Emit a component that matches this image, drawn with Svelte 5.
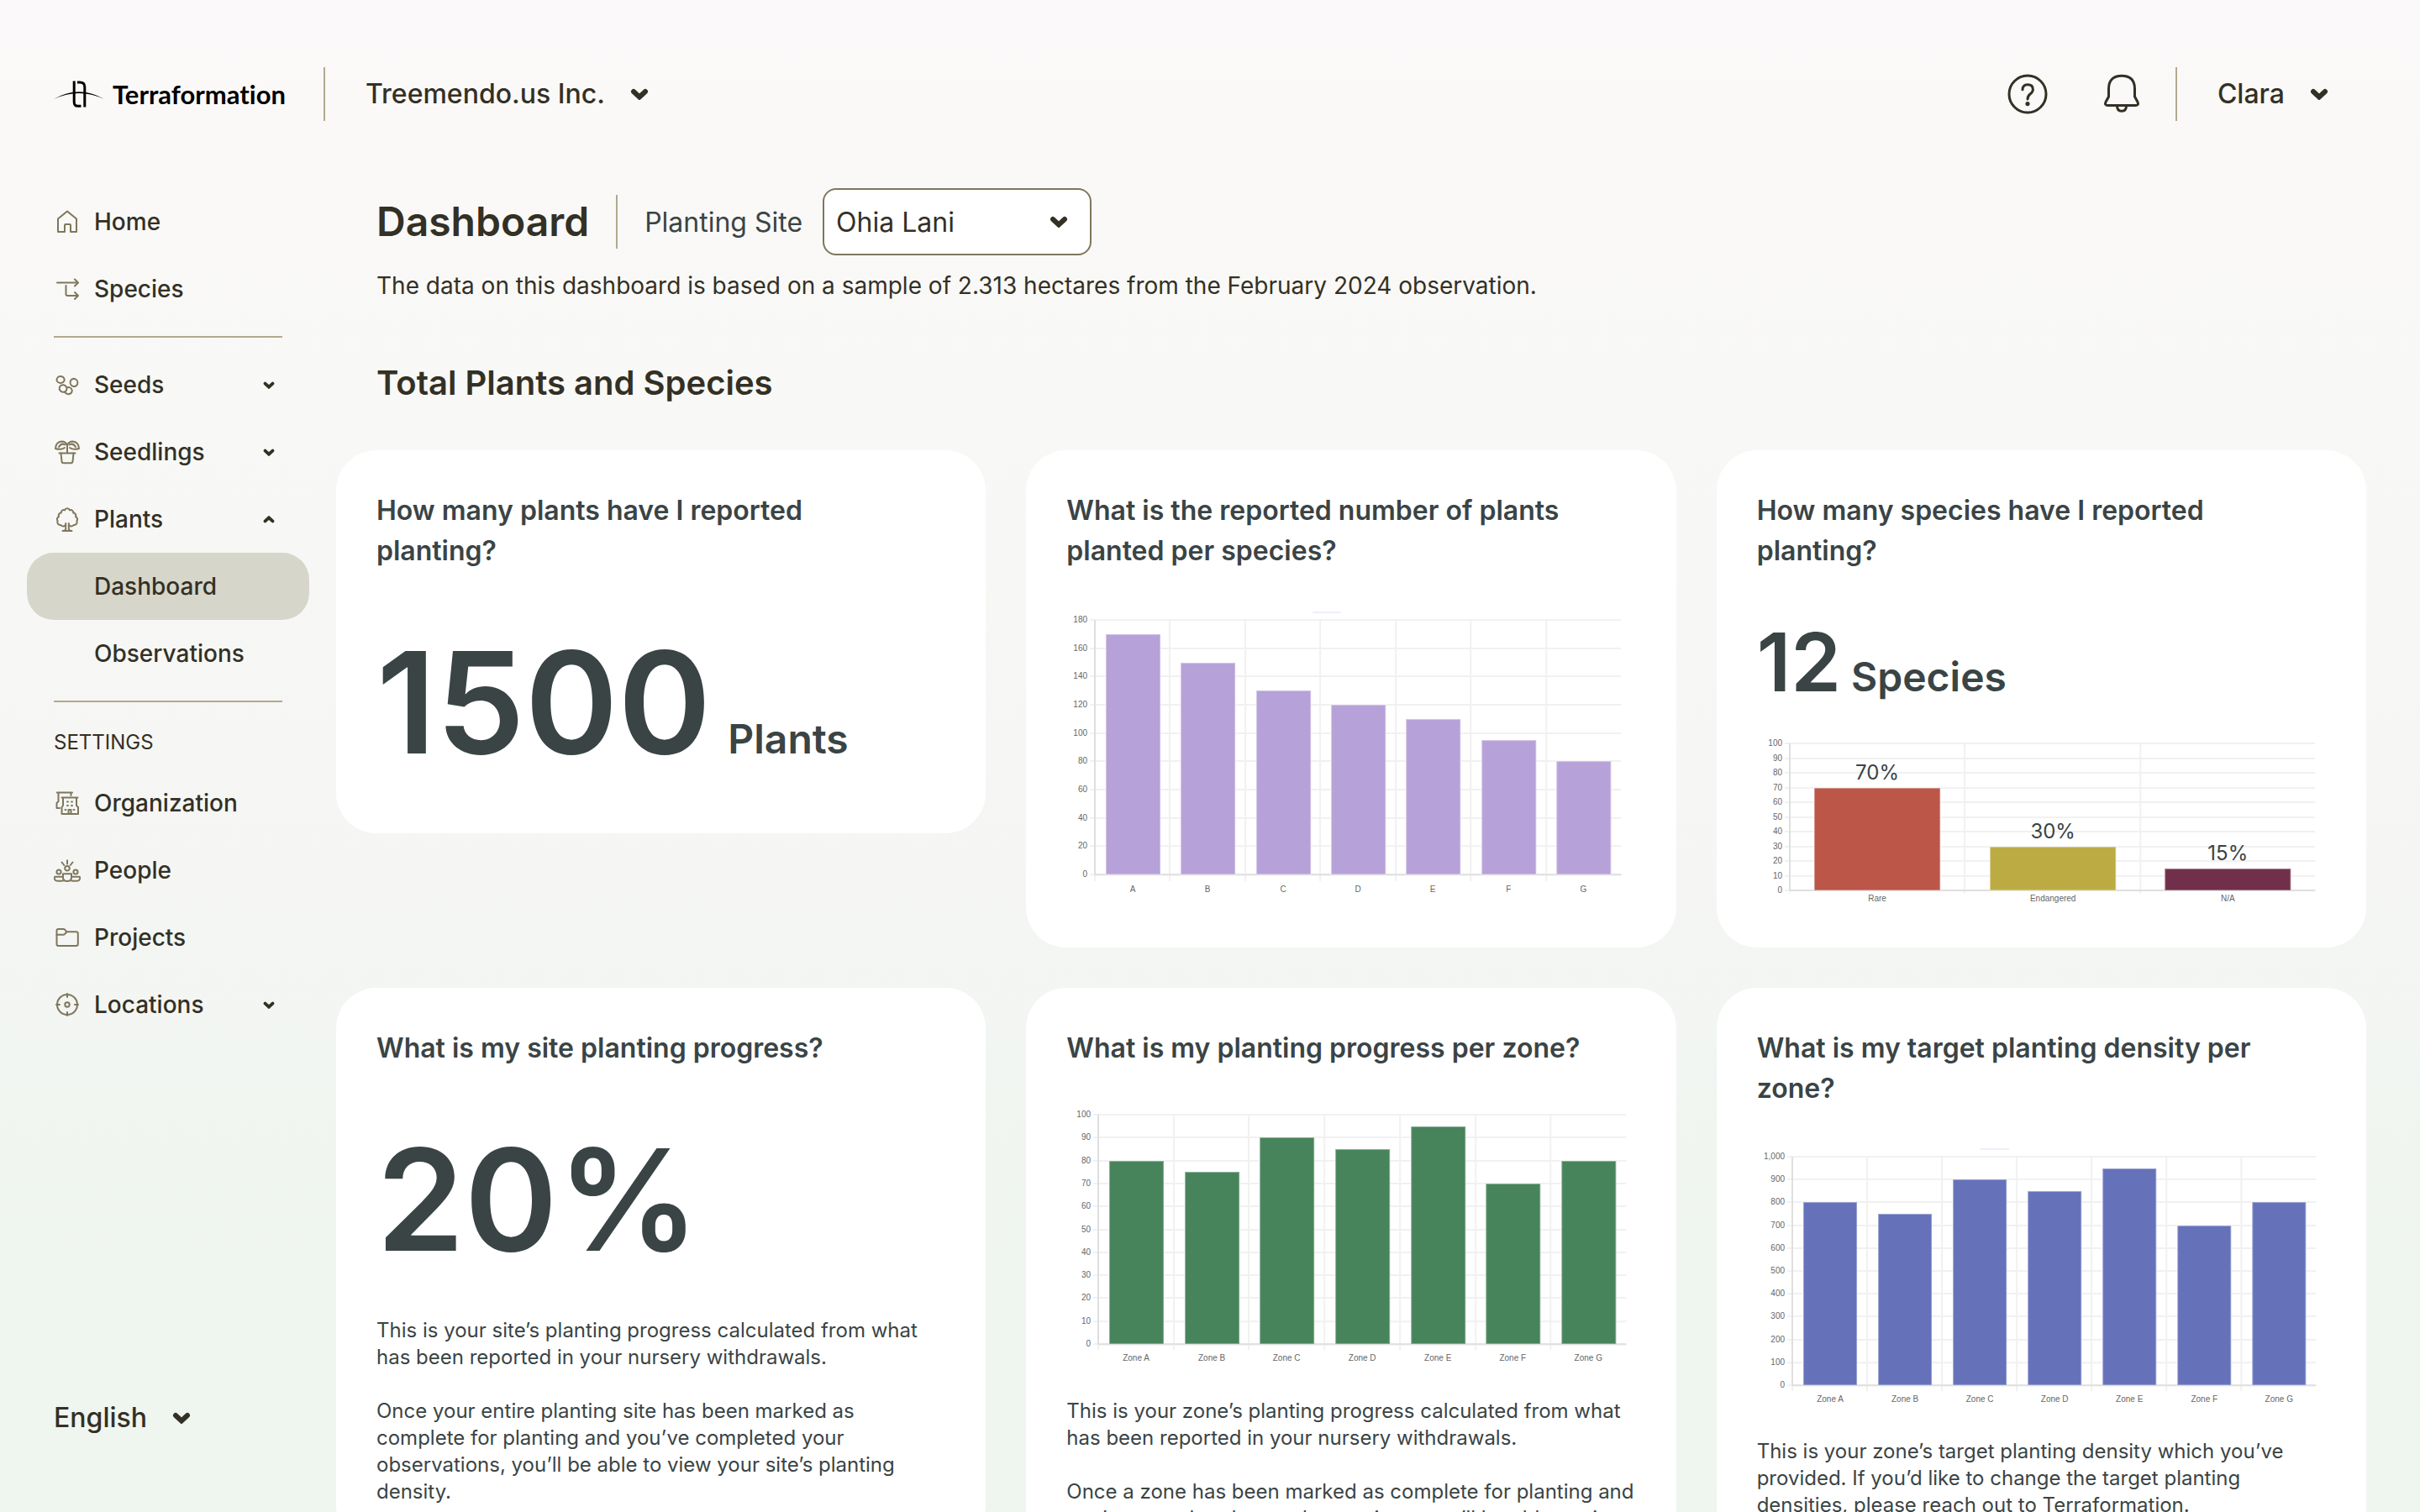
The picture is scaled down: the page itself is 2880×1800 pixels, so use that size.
<script>
  const caret = 'M4 4 L11 10.5 L18 4';

  const icons = {
    home: ['M5 12.5 L16 3.5 L27 12.5 V28 H20 V20 Q20 19 19 19 H14 Q13 19 13 20 V28 H5 Z'],
    species: ['M4 8.5 H28', 'M25 4.5 L29 8.5 L25 12.5', 'M14.5 12 V22 Q14.5 24 16.5 24 H28', 'M25 20 L29 24 L25 28'],
    seeds: [
      'M3.5 10 a4.6 4 0 1 0 9.2 0 a4.6 4 0 1 0 -9.2 0',
      'M19.8 12 a4.3 4.6 -20 1 0 8.4 3 a4.3 4.6 -20 1 0 -8.4 -3',
      'M6.8 19.8 a4.4 3.9 20 1 0 8.6 1.5 a4.4 3.9 20 1 0 -8.6 -1.5',
      'M16.5 19.2 A4.4 4 0 1 1 13.2 24.4'
    ],
    seedlings: [
      'M16 17 V8 Q14 3.5 9.5 3.5 Q2.5 4 2 12 Q9 14 13 11',
      'M16 8 Q18 3.5 22.5 3.5 Q29.5 4 30 12 Q23 14 19 11',
      'M13.5 7.5 Q9 5 6 10',
      'M18.5 7.5 Q23 5 26 10',
      'M6.5 17.5 H25.5',
      'M8.5 17.5 L9.5 27.5 Q9.8 29.3 11.5 29.3 H20.5 Q22.2 29.3 22.5 27.5 L23.5 17.5'
    ],
    plants: [
      'M13.5 23.5 A3.4 3.4 0 0 1 8.3 23 A3.4 3.4 0 0 1 4.6 18.2 A3.2 3.2 0 0 1 6 13.2 A3.2 3.2 0 0 1 8.8 8.6 A3 3 0 0 1 13 5.4 A3.2 3.2 0 0 1 19 5.4 A3 3 0 0 1 23.2 8.6 A3.2 3.2 0 0 1 26 13.2 A3.2 3.2 0 0 1 27.4 18.2 A3.4 3.4 0 0 1 23.7 23 A3.4 3.4 0 0 1 18.5 23.5',
      'M14.2 21 V28 Q14 30 10.5 30 H21.5 Q18 30 17.8 28 V21'
    ],
    organization: [
      'M3.8 3.5 H22 M5.5 3.5 V14 L3.5 16 V22 H7 M20.5 3.5 V7',
      'M9.5 9.5 H28.5 M11 9.5 V19 L9.5 21 V29 H29 V21 L27 19 V9.5',
      'M16 14.5 h1 M21 14.5 h1 M16 19 h1 M21 19 h1 M13.5 24 h1 M23.5 24 h1',
      'M17.5 29 V24 H20.5 V29'
    ],
    people: [
      'M13.2 13.7 a2.8 2.8 0 1 0 5.6 0 a2.8 2.8 0 1 0 -5.6 0',
      'M3.4 18 a2.6 2.6 0 1 0 5.2 0 a2.6 2.6 0 1 0 -5.2 0',
      'M23.4 18 a2.6 2.6 0 1 0 5.2 0 a2.6 2.6 0 1 0 -5.2 0',
      'M16 4.3 V8.5 M9.5 6.5 L12.3 10 M22.5 6.5 L19.7 10',
      'M11 20.3 H21 V25 Q21 29 16 29 Q11 29 11 25 Z',
      'M11 23.7 H1.8 Q0.5 23.7 0.8 25.5 Q1.2 28.8 5 28.8 H9 Q11 28.8 12 27.6',
      'M21 23.7 H30.2 Q31.5 23.7 31.2 25.5 Q30.8 28.8 27 28.8 H23 Q21 28.8 20 27.6'
    ],
    projects: [
      'M3.5 12.8 V8 Q3.5 6 5.5 6 H11.5 Q13 6 13.8 7.4 L15.3 9.3 H26.5 Q28.8 9.3 28.8 11.5 V23.8 Q28.8 26 26.5 26 H5.5 Q3.5 26 3.5 24 Z',
      'M3.5 12.8 H11.5 Q12.8 12.8 13.5 11.5 L15.3 9.3'
    ],
    locations: [
      'M4 16 a12 12 0 1 0 24 0 a12 12 0 1 0 -24 0',
      'M13.3 16 a2.7 2.7 0 1 0 5.4 0 a2.7 2.7 0 1 0 -5.4 0',
      'M16 3 V7 M16 25 V29 M3 16 H7 M25 16 H29'
    ]
  };

  const nav = [
    { label: 'Home', icon: 'home' },
    { label: 'Species', icon: 'species' },
    { rule: true },
    { label: 'Seeds', icon: 'seeds', toggle: 'closed' },
    { label: 'Seedlings', icon: 'seedlings', toggle: 'closed' },
    { label: 'Plants', icon: 'plants', toggle: 'open' },
    { label: 'Dashboard', sub: true, active: true },
    { label: 'Observations', sub: true },
    { rule: true },
    { heading: 'SETTINGS' },
    { label: 'Organization', icon: 'organization' },
    { label: 'People', icon: 'people' },
    { label: 'Projects', icon: 'projects' },
    { label: 'Locations', icon: 'locations', toggle: 'closed' }
  ];

  const zones = ['Zone A', 'Zone B', 'Zone C', 'Zone D', 'Zone E', 'Zone F', 'Zone G'];
  const progress = [80, 75, 90, 85, 95, 70, 80];

  const perSpecies = {
    name: 'Plants planted per species',
    height: 368, left: 34, right: 660, top: 26, bottom: 329, labelY: 350, tick: 8,
    max: 180, step: 20, barShare: 0.73, legend: [293, 327, 17],
    bars: [170, 150, 130, 120, 110, 95, 80].map((value, i) => ({ label: 'ABCDEFG'[i], value, color: '#b7a1d9' }))
  };
  const conservation = {
    name: 'Species by conservation status',
    height: 208, left: 39, right: 664, top: 13, bottom: 188, labelY: 201, tick: 4,
    max: 100, step: 10, barShare: 0.72, small: true,
    bars: [
      { label: 'Rare', value: 70, color: '#bc5648', note: '70%' },
      { label: 'Endangered', value: 30, color: '#bbab42', note: '30%' },
      { label: 'N/A', value: 15, color: '#712f4b', note: '15%' }
    ]
  };
  const zoneProgress = {
    name: 'Planting progress per zone',
    height: 328, left: 38, right: 666, top: 23, bottom: 296, labelY: 316, tick: 7,
    max: 100, step: 10, barShare: 0.72,
    bars: zones.map((label, i) => ({ label, value: progress[i], color: '#47845b' }))
  };
  const zoneDensity = {
    name: 'Target planting density per zone',
    height: 328, left: 42, right: 665, top: 25, bottom: 297, labelY: 317, tick: 7,
    max: 1000, step: 100, barShare: 0.72, legend: [265, 300, 16],
    bars: zones.map((label, i) => ({ label, value: progress[i] * 10, color: '#6572ba' }))
  };

  const ticks = (c) => Array.from({ length: c.max / c.step + 1 }, (_, i) => i * c.step);
  const yOf = (c, v) => Math.round(c.bottom - ((c.bottom - c.top) * v) / c.max);
  const slot = (c) => (c.right - c.left) / c.bars.length;
  const lineX = (c, i) => Math.round(c.left + slot(c) * i);
  const midX = (c, i) => Math.round(c.left + slot(c) * (i + 0.5));
  const barW = (c) => Math.round(slot(c) * c.barShare);
</script>

{#snippet chevron(kind)}
  <svg class="chevron {kind}" viewBox="0 0 22 14" aria-hidden="true"><path d={caret} /></svg>
{/snippet}

{#snippet chart(c)}
  <svg class="chart" class:small={c.small} viewBox="0 0 677 {c.height}" role="img" aria-label={c.name}>
    {#if c.legend}
      <line class="legend" x1={c.legend[0]} x2={c.legend[1]} y1={c.legend[2]} y2={c.legend[2]} />
    {/if}
    {#each ticks(c) as t}
      <line class="grid" x1={c.left - 6} x2={c.right} y1={yOf(c, t)} y2={yOf(c, t)} />
      <text class="axis" x={c.left - 9} y={yOf(c, t) + 3} text-anchor="end">{t.toLocaleString('en-US')}</text>
    {/each}
    {#each c.bars as bar, i}
      <line class="grid" x1={lineX(c, i)} x2={lineX(c, i)} y1={c.top} y2={c.bottom + c.tick} />
    {/each}
    <line class="base" x1={c.left} x2={c.left} y1={c.top} y2={c.bottom} />
    <line class="base" x1={c.left} x2={c.right} y1={c.bottom} y2={c.bottom} />
    {#each c.bars as bar, i}
      <rect
        x={midX(c, i) - Math.floor(barW(c) / 2)}
        y={yOf(c, bar.value)}
        width={barW(c)}
        height={c.bottom - yOf(c, bar.value)}
        fill={bar.color}
      />
      <text class="axis" x={midX(c, i)} y={c.labelY} text-anchor="middle">{bar.label}</text>
      {#if bar.note}
        <text class="note" x={midX(c, i)} y={yOf(c, bar.value) - 10} text-anchor="middle">{bar.note}</text>
      {/if}
    {/each}
  </svg>
{/snippet}

<div class="app">
  <header>
    <a class="logo" href="/" aria-label="Terraformation home">
      <svg viewBox="0 0 60 32" aria-hidden="true">
        <path d="M0 22 Q30 4.5 60 22 Q30 8 0 22 Z" fill="#000" />
        <path d="M24.2 0.6 V25.5 Q24.2 30.3 28.6 30.3 H32.5" />
        <path d="M28 1.9 H31 Q36.8 1.9 36.8 7.5 V31.6" />
      </svg>
      <span>Terraformation</span>
    </a>
    <span class="divider"></span>
    <button class="menu">Treemendo.us Inc. {@render chevron('large')}</button>
    <div class="tools">
      <button class="round" aria-label="Help">
        <svg viewBox="0 0 48 48" aria-hidden="true">
          <circle cx="24" cy="24" r="22" />
          <path d="M18 18.7 Q18 12.7 24 12.7 Q30.4 12.7 30.4 18.5 Q30.4 21.5 27 24 Q24 26.4 24 30" />
          <circle class="dot" cx="24" cy="35.6" r="2.6" />
        </svg>
      </button>
      <button class="round" aria-label="Notifications">
        <svg viewBox="0 0 48 48" aria-hidden="true">
          <path d="M8.5 18 Q8.5 2.3 24 2.3 Q39.5 2.3 39.5 18 V27 L43 33.5 Q44.6 37.4 41 37.4 H7 Q3.4 37.4 5 33.5 L8.5 27 Z" />
          <path d="M18.5 38 Q18.5 44.3 24 44.3 Q29.5 44.3 29.5 38" />
        </svg>
      </button>
    </div>
    <span class="divider"></span>
    <button class="menu">Clara {@render chevron('large')}</button>
  </header>

  <div class="body">
    <aside>
      <nav>
        {#each nav as item}
          {#if item.rule}
            <hr />
          {:else if item.heading}
            <p class="heading">{item.heading}</p>
          {:else}
            <a class="item" class:sub={item.sub} class:active={item.active} href="/{item.label.toLowerCase()}">
              {#if item.icon}
                <svg class="icon" viewBox="0 0 32 32" aria-hidden="true">
                  {#each icons[item.icon] as d}<path {d} />{/each}
                </svg>
              {/if}
              <span>{item.label}</span>
              {#if item.toggle}{@render chevron(item.toggle)}{/if}
            </a>
          {/if}
        {/each}
      </nav>
      <button class="language">English {@render chevron('large')}</button>
    </aside>

    <main>
      <div class="title">
        <h1>Dashboard</h1>
        <span class="divider"></span>
        <div class="site">
          <label for="site">Planting Site</label>
          <div class="select">
            <select id="site"><option>Ohia Lani</option></select>
            {@render chevron('large')}
          </div>
        </div>
      </div>
      <p class="intro">The data on this dashboard is based on a sample of 2.313 hectares from the February 2024 observation.</p>
      <h2>Total Plants and Species</h2>

      <div class="cards">
        <section>
          <h3>How many plants have I reported planting?</h3>
          <p class="figure"><span>1500</span><small>Plants</small></p>
        </section>
        <section>
          <h3>What is the reported number of plants planted per species?</h3>
          {@render chart(perSpecies)}
        </section>
        <section>
          <h3>How many species have I reported planting?</h3>
          <p class="figure medium"><span>12</span><small>Species</small></p>
          {@render chart(conservation)}
        </section>
        <section>
          <h3>What is my site planting progress?</h3>
          <p class="figure"><span>20%</span></p>
          <div class="copy">
            <p>This is your site’s planting progress calculated from what has been reported in your nursery withdrawals.</p>
            <p>Once your entire planting site has been marked as complete for planting and you’ve completed your observations, you’ll be able to view your site’s planting density.</p>
          </div>
        </section>
        <section>
          <h3>What is my planting progress per zone?</h3>
          {@render chart(zoneProgress)}
          <div class="copy">
            <p>This is your zone’s planting progress calculated from what has been reported in your nursery withdrawals.</p>
            <p>Once a zone has been marked as complete for planting and you’ve completed your observations, you’ll be able to view your zone’s planting density.</p>
          </div>
        </section>
        <section>
          <h3>What is my target planting density per zone?</h3>
          {@render chart(zoneDensity)}
          <div class="copy">
            <p>This is your zone’s target planting density which you’ve provided. If you’d like to change the target planting densities, please reach out to Terraformation.</p>
          </div>
        </section>
      </div>
    </main>
  </div>
</div>

<style>
  :global(body) {
    margin: 0;
  }

  .app {
    display: flex;
    flex-direction: column;
    height: 100vh;
    overflow: hidden;
    background: linear-gradient(180deg, #fcf9fa 0%, #faf9f7 8%, #f8f8f6 28%, #f5f6f4 58%, #f0f5f0 76%, #eff5ef 100%);
    color: #333025;
    font-family: Inter, 'Liberation Sans', sans-serif;
    font-size: 28px;
  }

  h1, h2, h3, p {
    margin: 0;
    font-weight: 600;
  }

  button, select {
    margin: 0;
    padding: 0;
    border: 0;
    background: none;
    color: inherit;
    font: inherit;
    cursor: pointer;
  }

  a {
    color: inherit;
    text-decoration: none;
  }

  svg {
    fill: none;
    flex-shrink: 0;
  }

  header {
    display: flex;
    align-items: center;
    flex-shrink: 0;
    height: 224px;
    padding: 0 109px 0 64px;
    box-sizing: border-box;
  }

  .logo {
    display: flex;
    align-items: center;
    gap: 10px;
    width: 273px;
    color: #000;
    font-family: Lato, 'Liberation Sans', sans-serif;
    font-size: 31px;
    font-variant-ligatures: none;
    font-weight: 700;
    line-height: 32px;
  }

  .logo svg {
    width: 60px;
    height: 32px;
    stroke: #000;
    stroke-width: 3;
  }

  .logo svg path:first-child {
    stroke: none;
  }

  .divider {
    width: 2px;
    height: 64px;
    flex-shrink: 0;
    background: #b2a98e;
  }

  header > .divider {
    margin: 0 48px;
  }

  .tools {
    display: flex;
    gap: 64px;
    margin-left: auto;
  }

  .tools + .divider {
    margin-left: 40px;
  }

  .menu, .language {
    display: flex;
    align-items: center;
    gap: 30px;
    font-size: 32px;
    font-weight: 500;
    line-height: 48px;
  }

  .round, .round svg {
    display: block;
    width: 48px;
    height: 48px;
  }

  .round svg {
    stroke: currentColor;
    stroke-width: 3;
    stroke-linecap: round;
  }

  .round .dot {
    fill: currentColor;
    stroke: none;
  }

  .chevron {
    width: 22px;
    height: 14px;
    stroke: currentColor;
    stroke-width: 6;
    stroke-linecap: round;
  }

  .open, .closed {
    width: 14px;
    height: 9px;
    margin-left: auto;
    margin-right: 9px;
  }

  .open {
    transform: rotate(180deg);
  }

  .body {
    display: flex;
    flex: 1;
    min-height: 0;
  }

  aside {
    display: flex;
    flex-direction: column;
    justify-content: space-between;
    width: 400px;
    flex-shrink: 0;
    padding: 0 32px 88px;
    box-sizing: border-box;
  }

  .item {
    display: flex;
    align-items: center;
    gap: 16px;
    height: 80px;
    padding: 0 32px;
    border-radius: 32px;
    font-weight: 500;
  }

  .item.sub {
    padding-left: 80px;
  }

  .item.active {
    background: #d7d6ca;
  }

  .icon {
    width: 32px;
    height: 32px;
    stroke: #7f775c;
    stroke-width: 2;
    stroke-linecap: round;
    stroke-linejoin: round;
  }

  hr {
    height: 2px;
    margin: 16px 32px;
    border: 0;
    background: #b2a98e;
  }

  .heading {
    padding-left: 32px;
    font-size: 24px;
    font-weight: 400;
    line-height: 64px;
  }

  .language {
    padding-left: 32px;
  }

  main {
    flex: 1;
    min-width: 0;
    padding-right: 64px;
  }

  .title {
    display: flex;
    align-items: center;
    gap: 32px;
    padding-left: 48px;
  }

  h1 {
    font-size: 48px;
    line-height: 64px;
  }

  .site {
    display: flex;
    align-items: center;
    gap: 24px;
  }

  label {
    color: #3a4445;
    font-size: 32px;
  }

  .select {
    position: relative;
    display: flex;
    align-items: center;
    width: 320px;
  }

  .select select {
    width: 100%;
    height: 80px;
    padding: 0 14px;
    border: 2px solid #7f775c;
    border-radius: 16px;
    background: #fff;
    font-size: 32px;
    appearance: none;
  }

  .select .chevron {
    position: absolute;
    right: 28px;
    pointer-events: none;
  }

  .intro {
    padding: 16px 48px 0;
    font-weight: 400;
    line-height: 40px;
  }

  h2 {
    padding: 72px 48px 56px;
    font-size: 40px;
    line-height: 48px;
  }

  .cards {
    display: grid;
    grid-template-columns: repeat(3, 1fr);
    align-items: start;
    gap: 48px;
  }

  section {
    display: flex;
    flex-direction: column;
    padding: 48px;
    border-radius: 48px;
    background: #fff;
    color: #3a4445;
  }

  h3 {
    padding-right: 32px;
    font-size: 32px;
    line-height: 48px;
  }

  .figure {
    display: flex;
    align-items: baseline;
    gap: 20px;
    padding-top: 48px;
    font-size: 168px;
    font-optical-sizing: none;
    line-height: 216px;
  }

  .figure.medium {
    gap: 12px;
    font-size: 96px;
    line-height: 120px;
  }

  .figure small {
    font-size: 48px;
    line-height: 48px;
  }

  .copy {
    display: grid;
    gap: 32px;
    padding-top: 32px;
    font-size: 24px;
    line-height: 32px;
  }

  .copy p {
    font-weight: 400;
  }

  .chart {
    display: block;
    width: 100%;
    margin-top: 32px;
    font-family: 'Liberation Sans', sans-serif;
  }

  .chart.small {
    margin-top: 24px;
  }

  .chart line {
    stroke-width: 2;
  }

  .chart rect {
    stroke: #fff;
    stroke-opacity: 0.35;
    stroke-width: 2;
  }

  .grid {
    stroke: #f1f1f1;
  }

  .base {
    stroke: #dfdfdf;
  }

  .legend {
    stroke: #f0effa;
  }

  .axis {
    fill: #666;
    font-size: 10px;
  }

  .note {
    fill: #3a4445;
    font-family: Inter, 'Liberation Sans', sans-serif;
    font-size: 24px;
  }
</style>
